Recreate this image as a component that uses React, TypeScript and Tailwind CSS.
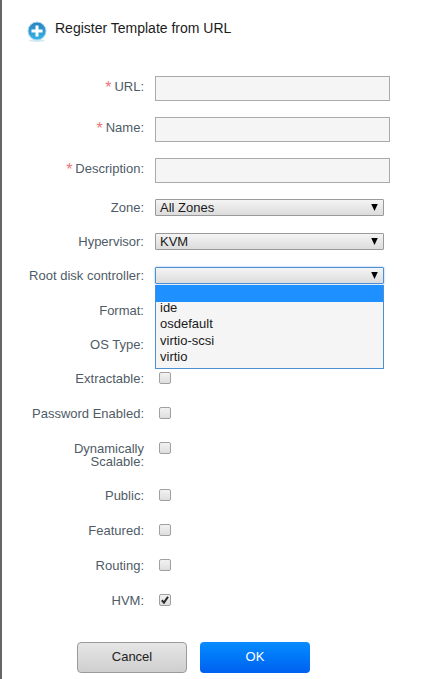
const F = "font-['Liberation_Sans',Arial,sans-serif]";

function Label({ text, req }: { text: React.ReactNode; req?: boolean }) {
  return (
    <div className="w-[142px] shrink-0 text-right text-[13px] leading-[13px] text-[#4f5b66]">
      {req && <span className="relative top-[2px] mr-[3px] text-[16px] leading-[10px] text-[#e8757a]">*</span>}
      {text}
    </div>
  );
}

function Text({ label, cls }: { label: string; cls: string }) {
  return (
    <div className={`flex items-start ${cls}`}>
      <div className="pt-[4px]"><Label text={label} req /></div>
      <div className="ml-[11px] h-[25px] w-[235px] border border-[#aaaaaa] bg-[#f5f5f5]" />
    </div>
  );
}

function Sel({ label, value, cls, focus }: { label: string; value: string; cls: string; focus?: boolean }) {
  return (
    <div className={`flex items-center ${cls}`}>
      <Label text={label} />
      <div
        className={`relative ml-[11px] flex h-[17px] w-[229px] items-center rounded-[1px] border bg-gradient-to-b from-[#f4f4f4] to-[#dcdcdc] pl-[4px] text-[13px] leading-[13px] text-[#1a1a1a] ${
          focus ? "border-[#4d90d6] shadow-[0_0_2px_#7fb2e5]" : "border-[#9a9a9a]"
        }`}
      >
        {value}
        <svg className="absolute right-[5px] top-[4px]" width="7" height="7" viewBox="0 0 7 7">
          <path d="M0.25 0H6.75L3.5 7Z" fill="#000" />
        </svg>
      </div>
    </div>
  );
}

function Check({ label, cls, checked, two }: { label: string; cls: string; checked?: boolean; two?: boolean }) {
  return (
    <div className={`flex items-start ${cls}`}>
      <Label text={two ? <>Dynamically<br />Scalable:</> : label} />
      <div className="relative ml-[15px] h-[12px] w-[12px] rounded-[2px] border border-[#a0a0a0] bg-gradient-to-b from-[#f2f2f2] to-[#dedede]">
        {checked && (
          <svg className="absolute left-0 top-0" width="10" height="10" viewBox="0 0 10 10">
            <path d="M1.8 5.2L4 7.6L8 1.8" fill="none" stroke="#2a2a2a" strokeWidth="2" />
          </svg>
        )}
      </div>
    </div>
  );
}

export default function App() {
  return (
    <div className={`${F} relative h-[679px] w-[430px] overflow-hidden border-l-2 border-[#666666] bg-white`}>
      <div className="absolute left-[-2px] top-[223px] h-[9px] w-[2px] bg-[#8a8a8a]" />
      <div className="absolute left-[-2px] top-[519px] h-px w-[2px] bg-[#333333]" />
      <div className="absolute left-[-2px] top-[560px] h-px w-[2px] bg-[#333333]" />
      <div className="absolute left-[-2px] top-[601px] h-px w-[2px] bg-[#333333]" />
      <div className="flex items-start pl-[25px] pt-[20px]">
        <svg width="21" height="22" viewBox="0 0 21 22" className="mt-[1px] shrink-0">
          <defs>
            <linearGradient id="g" x1="0" y1="0" x2="0" y2="1">
              <stop offset="0" stopColor="#2b82bd" />
              <stop offset="1" stopColor="#36b4ea" />
            </linearGradient>
          </defs>
          <ellipse cx="10" cy="19.5" rx="8" ry="1.5" fill="#d5e9f4" />
          <circle cx="10" cy="10" r="9" fill="url(#g)" stroke="#a9d8f0" strokeWidth="1" />
          <path d="M8.5 4.5h3V8.5h4v3h-4v4h-3v-4h-4v-3h4Z" fill="#fff" />
        </svg>
        <div className="ml-[7px] text-[14px] leading-[16px] text-[#1c1c1c]">Register Template from URL</div>
      </div>
      <div className="pt-[33px]">
        <Text label="URL:" cls="" />
        <Text label="Name:" cls="mt-[16px]" />
        <Text label="Description:" cls="mt-[16px]" />
        <Sel label="Zone:" value="All Zones" cls="mt-[16px]" />
        <Sel label="Hypervisor:" value="KVM" cls="mt-[17px]" />
        <Sel label="Root disk controller:" value="" cls="mt-[17px]" focus />
        <div className="mt-[20px] h-[13px]"><Label text="Format:" /></div>
        <div className="mt-[21px] h-[13px]"><Label text="OS Type:" /></div>
        <Check label="Extractable:" cls="mt-[21px]" />
        <Check label="Password Enabled:" cls="mt-[22px]" />
        <Check label="" two cls="mt-[22px]" />
        <Check label="Public:" cls="mt-[21px]" />
        <Check label="Featured:" cls="mt-[22px]" />
        <Check label="Routing:" cls="mt-[22px]" />
        <Check label="HVM:" checked cls="mt-[22px]" />
      </div>
      <div className="mt-[35px] flex pl-[75px]">
        <button className="h-[31px] w-[110px] rounded-[4px] border border-[#9a9a9a] bg-gradient-to-b from-[#e6e6e6] to-[#cfcfcf] pb-[2px] text-[13px] text-[#222]">
          Cancel
        </button>
        <button className="ml-[13px] h-[31px] w-[110px] rounded-[4px] bg-gradient-to-b from-[#0a8cff] to-[#0060f0] pb-[2px] text-[13px] text-white">
          OK
        </button>
      </div>
      <div className="absolute left-[153px] top-[285px] h-[84px] w-[229px] border-x border-b border-[#4d8fd0] bg-[#f5f5f5] text-[13px] leading-[16.4px] text-[#1a1a1a]">
        <div className="mb-[-1px] h-[17px] bg-[#1e90ff]" />
        <div className="pl-[4px] -translate-y-px">ide</div>
        <div className="pl-[4px] -translate-y-px">osdefault</div>
        <div className="pl-[4px] -translate-y-px">virtio-scsi</div>
        <div className="pl-[4px] -translate-y-px">virtio</div>
      </div>
    </div>
  );
}
